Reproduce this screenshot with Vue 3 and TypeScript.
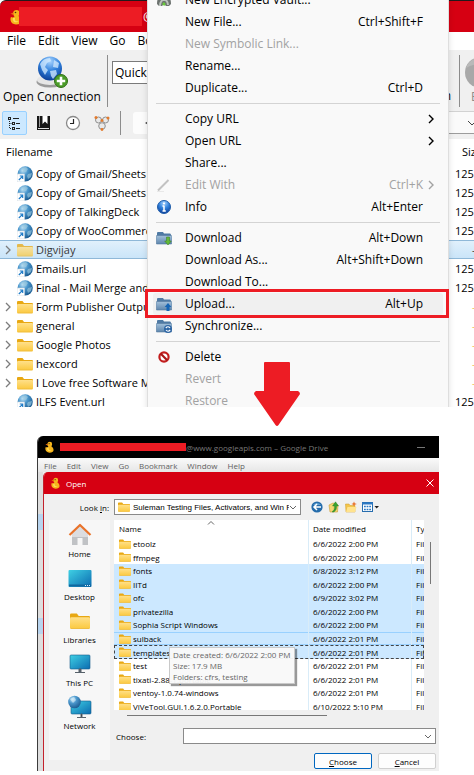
<script setup lang="ts">
interface MenuEntry {
  label?: string
  keys?: string
  icon?: string
  sub?: boolean
  disabled?: boolean
  active?: boolean
  separator?: boolean
}
interface RemoteFile {
  name: string
  folder?: boolean
  selected?: boolean
}
interface LocalFolder {
  name: string
  date: string
  state?: string
}

const menus: string[] = ['File', 'Edit', 'View', 'Go', 'Bookmark']
const innerMenus: string[] = ['File', 'Edit', 'View', 'Go', 'Bookmark', 'Window', 'Help']

const entries: MenuEntry[] = [
  { label: 'New Encrypted Vault...', icon: 'vault' },
  { label: 'New File...', keys: 'Ctrl+Shift+F' },
  { label: 'New Symbolic Link...', disabled: true },
  { label: 'Rename...' },
  { label: 'Duplicate...', keys: 'Ctrl+D' },
  { separator: true },
  { label: 'Copy URL', sub: true },
  { label: 'Open URL', sub: true },
  { label: 'Share...' },
  { label: 'Edit With', keys: 'Ctrl+K', icon: 'pencil', sub: true, disabled: true },
  { label: 'Info', keys: 'Alt+Enter', icon: 'info' },
  { separator: true },
  { label: 'Download', keys: 'Alt+Down', icon: 'download' },
  { label: 'Download As...', keys: 'Alt+Shift+Down' },
  { label: 'Download To...' },
  { label: 'Upload...', keys: 'Alt+Up', icon: 'upload', active: true },
  { label: 'Synchronize...', icon: 'sync' },
  { separator: true },
  { label: 'Delete', icon: 'delete' },
  { label: 'Revert', disabled: true },
  { label: 'Restore', disabled: true },
]

const files: RemoteFile[] = [
  { name: 'Copy of Gmail/Sheets' },
  { name: 'Copy of Gmail/Sheets' },
  { name: 'Copy of TalkingDeck' },
  { name: 'Copy of WooCommerce' },
  { name: 'Digvijay', folder: true, selected: true },
  { name: 'Emails.url' },
  { name: 'Final - Mail Merge and' },
  { name: 'Form Publisher Output', folder: true },
  { name: 'general', folder: true },
  { name: 'Google Photos', folder: true },
  { name: 'hexcord', folder: true },
  { name: 'I Love free Software Media', folder: true },
  { name: 'ILFS Event.url' },
]

const places: { label: string; icon: string }[] = [
  { label: 'Home', icon: 'home' },
  { label: 'Desktop', icon: 'desktop' },
  { label: 'Libraries', icon: 'library' },
  { label: 'This PC', icon: 'pc' },
  { label: 'Network', icon: 'network' },
]

const folders: LocalFolder[] = [
  { name: 'etoolz', date: '6/6/2022 2:00 PM' },
  { name: 'ffmpeg', date: '6/6/2022 2:00 PM' },
  { name: 'fonts', date: '6/8/2022 3:12 PM', state: 'on' },
  { name: 'IITd', date: '6/6/2022 2:00 PM', state: 'on' },
  { name: 'ofc', date: '6/9/2022 3:02 PM', state: 'on' },
  { name: 'privatezilla', date: '6/6/2022 2:00 PM', state: 'on' },
  { name: 'Sophia Script Windows', date: '6/6/2022 2:00 PM', state: 'on' },
  { name: 'sulback', date: '6/6/2022 2:01 PM', state: 'on hot' },
  { name: 'templates', date: '6/6/2022 2:01 PM', state: 'on focus' },
  { name: 'test', date: '6/6/2022 2:01 PM' },
  { name: 'tixati-2.88-1.portable', date: '6/6/2022 2:01 PM' },
  { name: 'ventoy-1.0.74-windows', date: '6/6/2022 2:01 PM' },
  { name: 'ViVeTool.GUI.1.6.2.0.Portable', date: '6/10/2022 5:10 PM' },
]
</script>

<template>
  <svg class="sprite" width="0" height="0" aria-hidden="true">
    <defs>
      <radialGradient id="gGlobe" cx="35%" cy="28%" r="80%">
        <stop offset="0" stop-color="#c4e6f8" /><stop offset=".4" stop-color="#4b97cc" /><stop offset="1" stop-color="#17568c" />
      </radialGradient>
      <radialGradient id="gBlue" cx="50%" cy="20%" r="80%">
        <stop offset="0" stop-color="#a8d4ff" /><stop offset=".5" stop-color="#2f80dc" /><stop offset="1" stop-color="#0d3f98" />
      </radialGradient>
      <linearGradient id="gFolder" x1="0" y1="0" x2="0" y2="1">
        <stop offset="0" stop-color="#ffe08a" /><stop offset="1" stop-color="#fbc93f" />
      </linearGradient>
      <linearGradient id="gSteel" x1="0" y1="0" x2="0" y2="1">
        <stop offset="0" stop-color="#a3c0da" /><stop offset="1" stop-color="#5e86ad" />
      </linearGradient>
      <linearGradient id="gScreen" x1="0" y1="0" x2="1" y2="1">
        <stop offset="0" stop-color="#3fd0e4" /><stop offset="1" stop-color="#0b6bb0" />
      </linearGradient>
    </defs>
    <symbol id="duck" viewBox="0 0 12 16">
      <path d="M1 8 Q3 9 4.500 7.500 Q3 6 3 4 Q3.500 1 6.500 1 Q9.500 1 9.500 4 Q9.500 6 8.500 7 Q11.500 9 11.500 12 Q11 15.500 6 15.500 Q1 15 .5 11 Q.3 9 1 8Z" fill="#f6b51c" />
      <path d="M5 9 Q4 13 9 12 Q7 14 4 13 Q2 11 3 9Z" fill="#fddc5a" />
      <path d="M3.500 3.500 L.5 4.800 L3.500 6Z" fill="#ee6c10" /><circle cx="5.500" cy="3.500" r=".8" fill="#4c3508" />
    </symbol>
    <symbol id="folder" viewBox="0 0 16 13">
      <path d="M0 1.500 Q0 .5 1 .5 H5.500 L7 2.500 H15 Q16 2.500 16 3.500 V11 H0Z" fill="#e8a813" />
      <rect x="0" y="3.500" width="16" height="9.200" rx="1" fill="url(#gFolder)" /><path d="M.5 12.500 H15.500" stroke="#edb93b" stroke-width=".7" />
    </symbol>
    <symbol id="globefile" viewBox="0 0 16 16">
      <circle cx="8.200" cy="7.800" r="7.600" fill="url(#gGlobe)" />
      <path d="M5 2 L9 1 L11 3 L9 6 L6 6Z M11 8 L15 7 L14 11 L11 13 L10 10Z" fill="#9cc9df" opacity=".65" />
      <rect x="0" y="8" width="7.500" height="8" fill="#fff" stroke="#c5d3dc" stroke-width=".6" />
      <path d="M1.800 14 L5.500 10.300 M2.800 10 H5.700 V13" fill="none" stroke="#1f7cc8" stroke-width="1.200" />
    </symbol>
    <symbol id="connect" viewBox="0 0 32 32">
      <ellipse cx="14" cy="26" rx="13.500" ry="5.500" fill="#9b9b9b" /><ellipse cx="14" cy="24" rx="13" ry="5" fill="#e6e6e6" />
      <circle cx="14" cy="12.500" r="12" fill="url(#gBlue)" />
      <path d="M4 8 Q7 2 14 2 L15 5 L11 7 L9 11 L12 14 L9 19 L6 14Z M18 4 L23 7 L22 12 L17 11Z M14 15 L20 14 L21 18 L17 23 L15 20Z" fill="#d5ecff" opacity=".75" />
      <circle cx="25" cy="25" r="6.500" fill="#4b9c28" stroke="#327018" /><path d="M25 20.800 V29.200 M20.800 25 H29.200" stroke="#fff" stroke-width="2.600" />
    </symbol>
    <symbol id="steel" viewBox="0 0 16 14">
      <path d="M1 2 Q1 1 2 1 H7 L8 2.500 H14 Q15 2.500 15 4 V6 H1Z" fill="#4f7aa4" />
      <path d="M0 5.500 Q0 4.500 1 4.500 H15 Q16 4.500 16 5.500 L15.500 13 H.5Z" fill="url(#gSteel)" stroke="#54799d" stroke-width=".6" />
    </symbol>
  </svg>

  <main class="page">
    <section class="browser">
      <header class="titlebar">
        <svg class="duck"><use href="#duck" /></svg>
        <span class="redacted"></span>
        <span>@</span>
      </header>
      <nav class="menubar">
        <button v-for="m in menus" :key="m" type="button">{{ m }}</button>
      </nav>
      <div class="toolbar">
        <button type="button" class="open">
          <svg width="32" height="32"><use href="#connect" /></svg>
          Open Connection
        </button>
        <i class="rule"></i>
        <select class="quick" aria-label="Quick Connect"><option>Quick Connect</option></select>
        <button type="button" class="action">Action</button>
        <i class="rule"></i>
        <button type="button" class="edit">
          <svg width="32" height="32" viewBox="0 0 32 32"><circle cx="15.500" cy="15.500" r="15.500" fill="#a8a8a8" /><path d="M1 11 Q4 2 15 0 L28 7Q12 5 1 11Z" fill="#b9b9b9" /></svg>
          <span>Edit</span>
        </button>
      </div>
      <div class="pathbar">
        <div class="tools">
          <button type="button" class="tool picked" aria-label="Outline">
            <svg width="16" height="16" viewBox="0 0 16 16" fill="none" stroke="#222"><path d="M6 3.500 H12 M9 8.500 H13 M9 13.500 H13" /><path d="M2.500 6 V13.500 H5 M2.500 8.500 H5" stroke-dasharray="1 1" /><rect x="1.500" y="2.500" width="2" height="2" /><rect x="5.500" y="7.500" width="2" height="2" /><rect x="5.500" y="12.500" width="2" height="2" /></svg>
          </button>
          <button type="button" class="tool" aria-label="Bookmarks">
            <svg width="15" height="16" viewBox="0 0 15 16"><path d="M1 1 H14 V15 H1Z" fill="#161616" /><path d="M3.500 1 V12" stroke="#9a9a9a" /><path d="M6.500 1 H11.500 V9 L9 6.500 L6.500 9Z" fill="#fff" /><path d="M2 13.500 H13" stroke="#ddd" /></svg>
          </button>
          <button type="button" class="tool" aria-label="History">
            <svg width="16" height="16" viewBox="0 0 16 16"><circle cx="8" cy="8" r="6.500" fill="#fff" stroke="#8a8a8a" stroke-width="1.300" /><path d="M8.500 4 V8.500 H5" fill="none" stroke="#222" stroke-width="1.200" /></svg>
          </button>
          <button type="button" class="tool" aria-label="Bonjour">
            <svg width="16" height="16" viewBox="0 0 16 16" fill="#e9e9e9" stroke="#8f8f8f"><circle cx="4.500" cy="5" r="3" /><circle cx="11.500" cy="5" r="3" /><circle cx="8" cy="11" r="3.300" /><g fill="#e27a2c" stroke="none"><circle cx="2" cy="2.500" r="1.500" /><circle cx="14" cy="3" r="1.500" /><circle cx="8" cy="5.500" r="1.400" /><circle cx="8" cy="14.500" r="1.400" /></g></svg>
          </button>
        </div>
        <i class="rule short"></i>
        <button type="button" class="back" aria-label="Back">
          <svg width="10" height="10" viewBox="0 0 10 10"><path d="M7.500 3.500 V6.500 L5 5Z" fill="#444" /></svg>
        </button>
        <div class="path">
          <svg width="10" height="6" viewBox="0 0 10 6"><path d="M1 1 L5 5 L9 1" fill="none" stroke="#444" /></svg>
        </div>
      </div>
      <table class="files">
        <thead>
          <tr><th>Filename</th><th class="size">Size</th></tr>
        </thead>
        <tbody>
          <tr v-for="(f, i) in files" :key="i" :class="{ selected: f.selected }">
            <td>
              <div class="name">
                <svg class="twist" viewBox="0 0 8 10"><path v-if="f.folder" d="M2 1 L6 5 L2 9" fill="none" stroke="#7c7c7c" stroke-width="1.300" /></svg>
                <svg class="fileicon"><use :href="f.folder ? '#folder' : '#globefile'" /></svg>
                <span>{{ f.name }}</span>
              </div>
            </td>
            <td class="size" :class="{ dash: f.folder }">{{ f.folder ? '--' : '125 B' }}</td>
          </tr>
        </tbody>
      </table>

      <div class="menu" role="menu">
        <template v-for="(e, i) in entries" :key="i">
          <hr v-if="e.separator" />
          <button v-else type="button" role="menuitem" :class="{ active: e.active }" :disabled="e.disabled">
            <span class="glyph">
              <svg v-if="e.icon === 'vault'" width="16" height="16" viewBox="0 0 16 16"><path d="M1 12 Q1 3 8 3 Q15 3 15 12 L13 14 H10 L8 12 L6 14 H3Z" fill="#6d7370" /><path d="M4 14 Q4 9 8 7 Q12 9 12 13" fill="none" stroke="#bcc3bd" stroke-width="2" /><path d="M7 11 L9 13" stroke="#68c83a" stroke-width="2.500" /></svg>
              <svg v-else-if="e.icon === 'pencil'" width="16" height="16" viewBox="0 0 16 16"><path d="M2 13.500 L12.500 3" stroke="#c2c2c2" stroke-width="2" /><path d="M1 14.500 H8" stroke="#e8e8e8" /></svg>
              <svg v-else-if="e.icon === 'info'" width="14" height="14" viewBox="0 0 14 14"><circle cx="7" cy="7" r="6.500" fill="url(#gBlue)" stroke="#1f5daa" /><path d="M7 6 V11 M5.500 6 H7.500 M5.500 11 H8.800" stroke="#fff" stroke-width="1.500" /><circle cx="7" cy="3.500" r="1.100" fill="#fff" /></svg>
              <svg v-else-if="e.icon === 'download'" width="16" height="14" viewBox="0 0 16 14"><use href="#steel" width="16" height="14" /><path d="M10.500 6 H13.500 V10 H15.300 L12 14 L8.700 10 H10.500Z" fill="#63b83a" stroke="#3b7f20" stroke-width=".5" /></svg>
              <svg v-else-if="e.icon === 'upload'" width="16" height="14" viewBox="0 0 16 14"><use href="#steel" width="16" height="14" /><path d="M10.500 14 H13.500 V10 H15.300 L12 6 L8.700 10 H10.500Z" fill="#1565b5" /></svg>
              <svg v-else-if="e.icon === 'sync'" width="16" height="14" viewBox="0 0 16 14"><use href="#steel" width="16" height="14" /><circle cx="12" cy="10" r="4" fill="#2e66a5" /><path d="M9.800 9 Q12 6.500 14 9 M14.200 11 Q12 13.500 10 11" fill="none" stroke="#fff" stroke-width="1.200" /></svg>
              <svg v-else-if="e.icon === 'delete'" width="12" height="12" viewBox="0 0 12 12"><circle cx="6" cy="6" r="4.600" fill="#fff" stroke="#c21d1d" stroke-width="2.200" /><path d="M2.800 2.800 L9.200 9.200" stroke="#a81717" stroke-width="2.200" /></svg>
            </span>
            <span class="text">{{ e.label }}</span>
            <kbd>{{ e.keys }}</kbd>
            <svg class="sub" viewBox="0 0 8 10"><path v-if="e.sub" d="M2 1 L6 5 L2 9" fill="none" stroke="currentColor" stroke-width="1.400" /></svg>
          </button>
        </template>
      </div>
      <div class="callout"></div>
    </section>

    <svg class="arrow" viewBox="0 0 46 64"><path d="M11 0 H35 Q36 0 36 1 V29 H44 Q46 30 46 32 L24.500 63 Q23 65 21.500 63 L0 32 Q0 30 2 29 H10 V1 Q10 0 11 0Z" fill="#ed1c24" /></svg>

    <section class="picker">
      <header class="outerbar">
        <svg class="duck"><use href="#duck" /></svg>
        <span class="redacted"></span>
        <span class="address">@www.googleapis.com – Google Drive</span>
        <i class="minimise"></i>
      </header>
      <nav class="outermenu">
        <button v-for="m in innerMenus" :key="m" type="button">{{ m }}</button>
      </nav>
      <div class="stage">
        <div class="edge"><i></i><i></i></div>
        <form class="dialog" @submit.prevent>
          <header class="dialogbar">
            <svg class="duck"><use href="#duck" /></svg>
            <span>Open</span>
            <button type="button" aria-label="Close"><svg width="8" height="8" viewBox="0 0 8 8"><path d="M.5 .5 L7.500 7.500 M7.500 .5 L.5 7.500" stroke="#fff" /></svg></button>
          </header>
          <div class="lookrow">
            <label for="lookin">Look <u>i</u>n:</label>
            <div class="combo lookin">
              <svg class="mini"><use href="#folder" /></svg>
              <select id="lookin"><option>Suleman Testing Files, Activators, and Win Fil</option></select>
              <svg class="down" viewBox="0 0 8 5"><path d="M1 1 L4 4 L7 1" fill="none" stroke="#666" /></svg>
            </div>
            <div class="lookicons">
              <button type="button" aria-label="Back"><svg width="12" height="12" viewBox="0 0 12 12"><circle cx="6" cy="6" r="5.600" fill="#256cab" /><path d="M2 4 Q6 0 10 4" fill="#8cc4ea" opacity=".6" /><path d="M10 6 H3 M6 3 L3 6 L6 9" fill="none" stroke="#fff" stroke-width="1.500" /></svg></button>
              <button type="button" aria-label="Up"><svg width="12" height="12" viewBox="0 0 12 12"><path d="M1 4 L5 2 L10 4 L9.500 11 H2Z" fill="#f6d774" stroke="#c99c35" stroke-width=".6" /><path d="M4 11 Q7 9 6.500 5 H4.500 L7.500 .8 L10.500 5 H8.500 Q9 9 6 11Z" fill="#39a332" stroke="#257a20" stroke-width=".4" /></svg></button>
              <button type="button" aria-label="New folder"><svg width="12" height="12" viewBox="0 0 12 12"><path d="M.5 3 H4 L5 4.500 H10 V11 H1Z" fill="#f3c64d" stroke="#d19b25" stroke-width=".5" /><path d="M2.500 6 H11.500 L10 11 H1Z" fill="#ffe38e" /><path d="M9 .5 L9.800 2.300 L11.800 3 L9.800 3.800 L9 5.500 L8.200 3.800 L6.500 3 L8.200 2.300Z" fill="#e9732d" /></svg></button>
              <button type="button" aria-label="View"><svg width="17" height="12" viewBox="0 0 17 12"><rect x=".5" y="1.500" width="10" height="9" fill="#fff" stroke="#276dae" /><path d="M0 2.500 H11" stroke="#2c79c4" stroke-width="2" /><path d="M2 5.500 H9 M2 8.500 H9" stroke="#2c79c4" stroke-width="1.300" stroke-dasharray="1.800 .8" /><path d="M12.500 5 H17 L14.700 7.500Z" fill="#222" /></svg></button>
            </div>
          </div>
          <div class="middle">
            <nav class="places">
              <button v-for="p in places" :key="p.label" type="button">
                <svg viewBox="0 0 26 24">
                  <template v-if="p.icon === 'home'"><path d="M5 10 L13 3 L21 10 V22 H15.500 V15 H10.500 V22 H5Z" fill="#c0c2c5" /><path d="M5 10 L13 3 L21 10 V14 H5Z" fill="#dcdde0" /><path d="M2.500 12 L13 2 L23.500 12" fill="none" stroke="#e9732a" stroke-width="2.200" stroke-linejoin="round" /></template>
                  <template v-else-if="p.icon === 'desktop'"><rect x="1.500" y="4" width="23" height="17" rx="1" fill="url(#gScreen)" /><path d="M2 19.500 H24" stroke="#10679f" stroke-width="2" /><path d="M18 19.500 H23" stroke="#d6f0ff" stroke-dasharray="1 1" /></template>
                  <template v-else-if="p.icon === 'library'"><use href="#folder" x="3" y="3" width="20" height="18" /></template>
                  <template v-else-if="p.icon === 'pc'"><rect x="3" y="3" width="20" height="14" rx="1" fill="url(#gScreen)" stroke="#165a8c" stroke-width=".6" /><path d="M12 17 H14 V20.500 H12Z M8 20.500 H18" fill="#56616a" stroke="#56616a" /></template>
                  <template v-else><rect x="4" y="6" width="20" height="13" rx="1" fill="url(#gScreen)" stroke="#165a8c" stroke-width=".6" /><path d="M14 19 H15 V22 H14Z M10 22.500 H19" stroke="#56616a" /><circle cx="7.500" cy="7" r="6.300" fill="url(#gGlobe)" /><path d="M3 4 L7 2 L9 5 L6 8Z" fill="#d9eef8" opacity=".6" /></template>
                </svg>
                {{ p.label }}
              </button>
            </nav>
            <div class="listing">
              <div class="viewport">
                <table>
                  <thead>
                    <tr>
                      <th>Name <svg class="sort" viewBox="0 0 8 4"><path d="M1 3.500 L4 .5 L7 3.500" fill="none" stroke="#666" /></svg></th>
                      <th>Date modified</th>
                      <th>Ty</th>
                    </tr>
                  </thead>
                  <tbody>
                    <tr v-for="f in folders" :key="f.name" :class="f.state">
                      <td><svg class="mini"><use href="#folder" /></svg>{{ f.name }}</td>
                      <td>{{ f.date }}</td>
                      <td>Fil</td>
                    </tr>
                  </tbody>
                </table>
                <i class="vbar"></i>
              </div>
              <i class="hbar"></i>
              <div class="tip" role="tooltip">
                <span>Date created: 6/6/2022 2:00 PM</span>
                <span>Size: 17.9 MB</span>
                <span>Folders: cfrs, testing</span>
              </div>
              <div class="chooserow">
                <label for="choose">Choose:</label>
                <div class="combo">
                  <select id="choose"><option></option></select>
                  <svg class="down" viewBox="0 0 8 5"><path d="M1 1 L4 4 L7 1" fill="none" stroke="#666" /></svg>
                </div>
              </div>
              <div class="actions">
                <button type="submit" class="primary"><u>C</u>hoose</button>
                <button type="button"><u>C</u>ancel</button>
              </div>
            </div>
          </div>
        </form>
      </div>
    </section>
  </main>
</template>

<style>
body {
  background: #fff;
}
</style>

<style scoped>
* {
  box-sizing: border-box;
}
.sprite,
svg {
  display: block;
  flex: none;
}
button,
select {
  font: inherit;
  color: inherit;
  background: none;
  border: 0;
  padding: 0;
  margin: 0;
}
select {
  appearance: none;
}
.page {
  position: relative;
  font-family: 'Open Sans', 'Noto Sans', sans-serif;
  font-size: 12px;
  line-height: 16px;
  color: #000;
  overflow: hidden;
}
.browser {
  position: relative;
  height: 407px;
  overflow: hidden;
  background: #fff;
}
.titlebar {
  display: flex;
  align-items: center;
  height: 32px;
  padding-left: 10px;
  border-top: 1px solid #221a1c;
  border-top-left-radius: 6px;
  background: #d60012;
  color: #fff;
}
.titlebar .duck {
  width: 12px;
  height: 16px;
}
.titlebar .redacted {
  width: 123px;
  height: 19px;
  margin: 0 1px 0 -3px;
  background: #ed1c24;
}
.menubar {
  display: flex;
  align-items: center;
  gap: 12px;
  height: 18px;
  padding-left: 7px;
}
.toolbar {
  display: flex;
  align-items: center;
  height: 61px;
  background: #f0f0f0;
}
.rule {
  width: 1px;
  height: 52px;
  background: #8c8c8c;
}
.open {
  display: flex;
  flex-direction: column;
  align-items: center;
  gap: 1px;
  width: 107px;
  padding-right: 3px;
  white-space: nowrap;
}
.quick {
  width: 140px;
  height: 23px;
  margin: -16px auto 0 4px;
  padding-left: 2px;
  border: 1px solid #7a7a7a;
  background: #fff;
}
.action {
  align-self: flex-end;
  margin: 0 8px 7px 0;
}
.edit {
  width: 14px;
  padding-left: 5px;
  color: #8a8a8a;
  text-align: left;
}
.edit span {
  display: block;
  margin-left: 6px;
}
.pathbar {
  display: flex;
  align-items: flex-start;
  height: 28px;
  background: #f0f0f0;
}
.tools {
  display: flex;
  gap: 4px;
  padding-left: 2px;
}
.tool {
  display: grid;
  place-items: center;
  width: 25px;
  height: 24px;
  border-radius: 2px;
}
.tool.picked {
  border: 1px solid #99d1ff;
  background: #cce8ff;
}
.rule.short {
  height: 24px;
  margin-left: 6px;
}
.back {
  display: grid;
  place-items: center;
  width: 24px;
  height: 22px;
  margin: 1px 8px 0 12px;
  border-radius: 3px;
  background: #fcfcfc;
}
.path {
  display: flex;
  flex: 1;
  align-items: center;
  justify-content: flex-end;
  height: 23px;
  margin-right: -3px;
  border-top: 1px solid #d2d2d2;
  border-bottom: 1px solid #9c9c9c;
  background: #fafafa;
}
.files {
  width: 100%;
  table-layout: fixed;
  border-collapse: collapse;
  font-size: 11px;
}
.files th {
  height: 25px;
  padding: 0 0 0 6px;
  font-weight: 400;
  text-align: left;
}
.files td {
  height: 19px;
  padding: 0;
  white-space: nowrap;
}
.files .size {
  width: 24px;
  padding-left: 5px;
  overflow: hidden;
  white-space: nowrap;
}
.files th.size {
  padding-left: 12px;
}
.files .dash {
  color: #f3c75c;
  text-indent: 17px;
}
.files .selected td {
  background: linear-gradient(#e2f1fc, #c9e4f8);
  box-shadow: inset 0 1px #8fb8d8, inset 0 -1px #8fb8d8;
  color: #3b3b3b;
}
.files .selected .fileicon {
  opacity: 0.75;
}
.name {
  display: flex;
  align-items: center;
  height: 19px;
  padding-left: 4px;
  overflow: hidden;
}
.twist {
  width: 8px;
  height: 10px;
  margin-right: 5px;
}
.fileicon {
  width: 16px;
  height: 16px;
  margin-right: 3px;
}
.menu {
  position: absolute;
  top: -11px;
  left: 147px;
  right: 25px;
  height: 440px;
  padding: 0 5px;
  border: 1px solid #dedede;
  border-width: 0 1px;
  background: #f9f9f9;
  box-shadow: 0 0 6px rgba(0, 0, 0, 0.12);
}
.menu button {
  display: flex;
  align-items: center;
  width: 100%;
  height: 22px;
  padding: 0 8px 0 3px;
  border-radius: 3px;
  text-align: left;
}
.menu button:disabled {
  color: #a2a2a2;
}
.menu button.active {
  background: #f0f0f0;
}
.menu hr {
  height: 1px;
  margin: 4px 3px;
  border: 0;
  background: #d4d4d4;
}
.glyph {
  display: grid;
  place-items: center;
  width: 16px;
  margin-right: 13px;
}
.text {
  flex: 1;
}
kbd {
  font: inherit;
}
.sub {
  width: 8px;
  height: 10px;
  margin-left: 4px;
}
.callout {
  position: absolute;
  top: 289px;
  left: 145px;
  right: 25px;
  height: 29px;
  border: 3px solid #ed1c24;
}
.arrow {
  position: absolute;
  top: 362px;
  left: 254px;
  width: 46px;
  height: 64px;
}
.picker {
  margin: 29px 35px 3px 37px;
  overflow: hidden;
  border-left: 1px solid #3c3c3c;
  border-top-left-radius: 6px;
  font-size: 8px;
  line-height: 11px;
  background: #f0f0f0;
}
.outerbar {
  display: flex;
  align-items: center;
  height: 22px;
  padding: 0 14px 0 7px;
  background: #000;
  color: #777;
}
.picker .duck {
  width: 9px;
  height: 12px;
}
.outerbar .redacted {
  width: 126px;
  height: 8px;
  margin-left: 6px;
  background: #ed1c24;
}
.address {
  flex: 1;
  white-space: nowrap;
}
.minimise {
  width: 8px;
  height: 1px;
  background: #777;
}
.outermenu {
  display: flex;
  align-items: center;
  gap: 10px;
  height: 14px;
  padding-left: 6px;
  background: linear-gradient(#fafafa, #e6e6e6);
  color: #5f5f5f;
}
.stage {
  display: flex;
}
.edge {
  display: flex;
  flex-direction: column;
  gap: 88px;
  width: 5px;
  padding-top: 42px;
  background: #dedede;
}
.edge i {
  height: 16px;
  background: #b8d4ee;
}
.dialog {
  flex: 1;
  min-width: 0;
  height: 299px;
  border-left: 1px solid #c3222c;
  border-top-left-radius: 5px;
  overflow: hidden;
  background: #f0f0f0;
}
.dialogbar {
  display: flex;
  align-items: center;
  gap: 6px;
  height: 22px;
  padding: 0 5px 0 7px;
  background: #d60012;
  color: #fff;
}
.dialogbar button {
  margin-left: auto;
}
.lookrow {
  display: flex;
  align-items: center;
  height: 26px;
}
.lookrow label {
  width: 70px;
  padding-right: 5px;
  text-align: right;
}
.combo {
  display: flex;
  align-items: center;
  height: 16px;
  padding: 0 3px;
  border: 1px solid #8a8a8a;
  background: #fff;
}
.combo select {
  flex: 1;
  min-width: 0;
  height: 13px;
}
.lookin {
  width: 187px;
}
.lookin select {
  font-family: 'Liberation Sans', sans-serif;
}
.mini {
  width: 12px;
  height: 10px;
}
.lookin .mini {
  margin-right: 3px;
}
.down {
  width: 8px;
  height: 5px;
}
.lookicons {
  display: flex;
  gap: 5px;
  margin-left: 10px;
}
.middle {
  display: flex;
}
.places {
  width: 61px;
  height: 240px;
  margin: 0 4px 0 5px;
  padding-top: 3px;
  background: #f7f7f7;
}
.places button {
  display: flex;
  flex-direction: column;
  align-items: center;
  gap: 1px;
  width: 100%;
  height: 43px;
}
.places svg {
  width: 26px;
  height: 24px;
}
.listing {
  position: relative;
  flex: 1;
  min-width: 0;
}
.viewport {
  display: flex;
  height: 190px;
  overflow: hidden;
}
.listing table {
  display: block;
  flex: 1;
  min-width: 0;
  background: #fff;
}
.listing thead {
  display: block;
}
.listing tbody {
  display: grid;
  grid-auto-rows: 1fr;
  height: 176px;
}
.listing tr {
  display: grid;
  grid-template-columns: 1fr 103px 13px;
  align-items: center;
}
.listing thead tr {
  height: 17px;
}
.listing th,
.listing td {
  display: flex;
  align-items: center;
  align-self: stretch;
  padding: 0 0 0 4px;
  border-left: 1px solid #d9ecf8;
  font-weight: 400;
  white-space: nowrap;
  overflow: hidden;
}
.listing th:first-child,
.listing td:first-child {
  padding-left: 5px;
  border-left: 0;
}
.listing td .mini {
  margin-right: 2px;
}
.sort {
  width: 8px;
  height: 4px;
  margin: -12px 0 0 66px;
}
.on {
  background: #cce8ff;
}
.hot {
  box-shadow: inset 0 1px #99d1ff, inset 0 -1px #99d1ff;
}
.focus {
  outline: 1px dashed #444;
  outline-offset: -1px;
}
.vbar {
  width: 1px;
  height: 42px;
  margin: 22px 8px 0 6px;
  background: #777;
}
.hbar {
  display: block;
  width: 200px;
  height: 1px;
  margin: 5px 0 0 13px;
  background: #777;
}
.tip {
  position: absolute;
  top: 127px;
  left: 55px;
  display: grid;
  width: 126px;
  padding: 1px 0 1px 3px;
  border: 1px solid #c9c9c9;
  background: rgba(249, 249, 249, 0.95);
  box-shadow: 2px 2px 1px rgba(0, 0, 0, 0.4);
  color: #666;
  white-space: nowrap;
}
.chooserow {
  display: flex;
  align-items: center;
  margin: 12px 3px 9px 2px;
}
.chooserow label {
  width: 67px;
}
.chooserow .combo {
  flex: 1;
}
.actions {
  display: flex;
  justify-content: flex-end;
  gap: 6px;
  padding-right: 3px;
}
.actions button {
  width: 58px;
  height: 16px;
  border: 1px solid #d0d0d0;
  border-radius: 2px;
  background: #fdfdfd;
}
.actions .primary {
  border-color: #0067c0;
}
</style>
